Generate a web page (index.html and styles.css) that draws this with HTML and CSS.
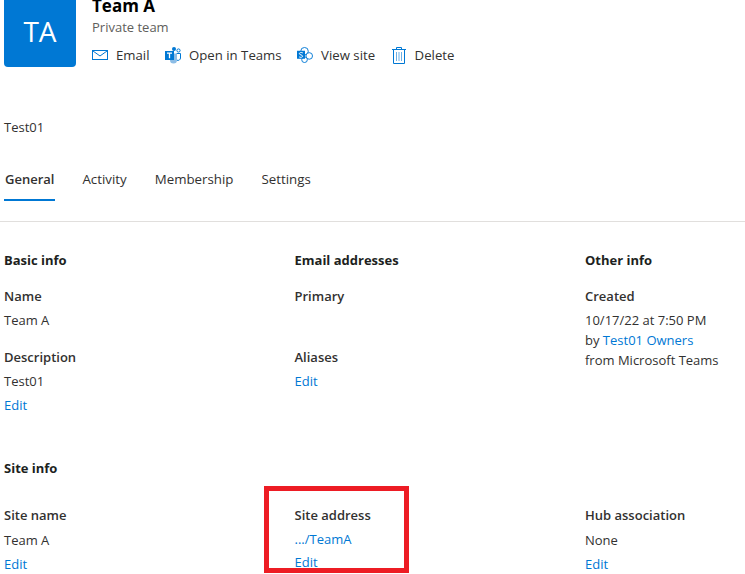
FILE: index.html
```html
<!DOCTYPE html>
<html lang="en">
<head>
<meta charset="utf-8">
<title>Team A</title>
<link rel="stylesheet" href="styles.css">
</head>
<body>
<main class="page">
  <header class="head">
    <div class="avatar">TA</div>
    <div class="head-text">
      <h1 class="title">Team A</h1>
      <div class="subtitle">Private team</div>
      <div class="actions">
        <a class="action">
          <svg class="icon" width="16" height="16" viewBox="0 0 16 16" fill="none" stroke="#0078d4"><rect x="0.5" y="3.5" width="15" height="9"/><path d="M1 4l7 5L15 4"/></svg>
          <span>Email</span>
        </a>
        <a class="action">
          <svg class="icon" width="16" height="18" viewBox="0 0 16 18"><circle cx="9" cy="3" r="2" fill="#0078d4"/><circle cx="13.5" cy="4.5" r="1.6" fill="none" stroke="#0078d4"/><path d="M11.5 7.5h4v4.5a2.5 2.5 0 0 1-3.5 2.2" fill="none" stroke="#0078d4"/><path d="M5 7.5h7v6.5a3.5 3.5 0 0 1-7 0z" fill="#8cbde6"/><rect x="0" y="5" width="9" height="9" fill="#0078d4"/><path d="M2 7.2h5M4.5 7.2v5" stroke="#fff" stroke-width="1.3"/></svg>
          <span>Open in Teams</span>
        </a>
        <a class="action">
          <svg class="icon" width="16" height="18" viewBox="0 0 17 18"><circle cx="8" cy="5" r="4" fill="#fff" stroke="#0078d4"/><circle cx="13" cy="10" r="3.5" fill="#fff" stroke="#0078d4"/><circle cx="8" cy="14" r="3" fill="#fff" stroke="#0078d4"/><rect x="0" y="4.5" width="8.5" height="8.5" fill="#0078d4"/><path d="M6.2 6.8C5 6 2.5 6.2 2.5 7.6c0 1.6 3.5 1 3.5 2.7 0 1.3-2.5 1.5-3.7.7" fill="none" stroke="#fff"/></svg>
          <span>View site</span>
        </a>
        <a class="action">
          <svg class="icon" width="16" height="18" viewBox="0 0 16 18" fill="none" stroke="#0078d4"><path d="M1 3.5h14M5.5 3.5v-2h5v2M2.5 3.5v14h11v-14"/><path d="M5.5 6v9M8 6v9M10.5 6v9" stroke="#6cb0e6"/></svg>
          <span>Delete</span>
        </a>
      </div>
    </div>
  </header>

  <p class="desc">Test01</p>

  <nav class="tabs">
    <a class="tab tab-active">General</a>
    <a class="tab">Activity</a>
    <a class="tab">Membership</a>
    <a class="tab">Settings</a>
  </nav>

  <section class="grid grid-basic">
    <div class="col">
      <h2 class="section-title">Basic info</h2>
      <div class="field">
        <div class="label">Name</div>
        <div class="value">Team A</div>
      </div>
      <div class="field">
        <div class="label">Description</div>
        <div class="value">Test01</div>
        <a class="link edit">Edit</a>
      </div>
    </div>
    <div class="col">
      <h2 class="section-title">Email addresses</h2>
      <div class="field">
        <div class="label">Primary</div>
        <div class="value">&nbsp;</div>
      </div>
      <div class="field">
        <div class="label">Aliases</div>
        <a class="link value">Edit</a>
      </div>
    </div>
    <div class="col">
      <h2 class="section-title">Other info</h2>
      <div class="field">
        <div class="label">Created</div>
        <div class="value">10/17/22 at 7:50 PM</div>
        <div>by <a class="link">Test01 Owners</a></div>
        <div>from Microsoft Teams</div>
      </div>
    </div>
  </section>

  <h2 class="section-title site-title">Site info</h2>
  <section class="grid grid-site">
    <div class="col">
      <div class="label label-loose">Site name</div>
      <div class="value">Team A</div>
      <a class="link edit">Edit</a>
    </div>
    <div class="col">
      <div class="label">Site address</div>
      <a class="link value">.../TeamA</a>
      <a class="link edit-tight">Edit</a>
    </div>
    <div class="col">
      <div class="label label-loose">Hub association</div>
      <div class="value">None</div>
      <a class="link edit">Edit</a>
    </div>
  </section>

  <div class="highlight"></div>
</main>
</body>
</html>
```
FILE: styles.css
```css
* { box-sizing: border-box; }
html, body { margin: 0; padding: 0; background: #fff; overflow: hidden; }
.page {
  position: relative;
  width: 745px;
  height: 574px;
  overflow: hidden;
  font-family: "Open Sans", "Noto Sans", "Liberation Sans", sans-serif;
  font-size: 13px;
  line-height: 20px;
  color: #323130;
}
.head { display: flex; gap: 16px; margin: -5px 0 0 4px; height: 72px; }
.avatar {
  width: 72px;
  height: 72px;
  border-radius: 4px;
  background: #0078d4;
  color: #fff;
  font-size: 28px;
  font-weight: 500;
  line-height: 72px;
  text-align: center;
}
.title { margin: 0; font-size: 17px; line-height: 22px; font-weight: 700; color: #000; }
.subtitle { color: #605e5c; }
.actions { display: flex; gap: 15.5px; margin-top: 8px; font-size: 13.2px; }
.action { display: flex; align-items: center; gap: 8px; height: 20px; color: #323130; }
.icon { display: block; flex: none; }
.desc { margin: 50px 0 0 4px; }
.tabs { display: flex; gap: 26px; margin-top: 32px; padding: 0 0 0 4px; height: 53px; border-bottom: 1px solid #e1dfdd; font-size: 13.3px; }
.tab { height: 32px; padding: 0 1px; }
.tab-active { font-size: 13px; font-weight: 600; border-bottom: 2px solid #0078d4; }
.grid { display: grid; grid-template-columns: repeat(3, 290.5px); padding-left: 4px; }
.grid-basic { margin-top: 28px; }
.section-title { margin: 0 0 16px; font-size: 13px; line-height: 20px; font-weight: 700; color: #201f1e; }
.field + .field { margin-top: 17px; }
.label { font-weight: 600; margin-bottom: 4px; }
.label-loose { margin-bottom: 5px; }
.value { display: block; }
.link { color: #0078d4; }
.edit { display: block; margin-top: 4px; }
.edit-tight { display: block; margin-top: 3px; }
.site-title { margin: 43px 0 0 4px; }
.grid-site { margin-top: 27px; }
.highlight {
  position: absolute;
  left: 264px;
  top: 486px;
  width: 145px;
  height: 87px;
  border: 5px solid #ed1c24;
}
```
